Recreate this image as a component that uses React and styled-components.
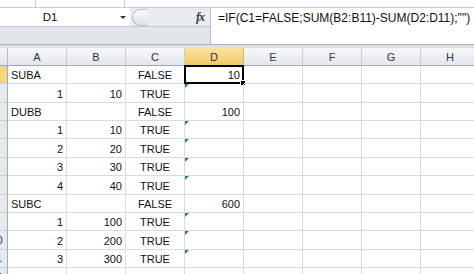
import styled, { createGlobalStyle } from 'styled-components';

const GlobalStyle = createGlobalStyle`
  html, body {
    margin: 0;
    padding: 0;
    background: #ffffff;
    overflow: hidden;
  }
  body {
    font-family: "Liberation Sans", Arial, sans-serif;
    font-size: 11px;
    color: #000;
  }
`;

const COLS = ['A', 'B', 'C', 'D', 'E', 'F', 'G', 'H'];

const rows = [
  { a: 'SUBA', c: 'FALSE', d: '10', sel: true },
  { a: '1', b: '10', c: 'TRUE', tri: true },
  { a: 'DUBB', c: 'FALSE', d: '100' },
  { a: '1', b: '10', c: 'TRUE', tri: true },
  { a: '2', b: '20', c: 'TRUE', tri: true },
  { a: '3', b: '30', c: 'TRUE', tri: true },
  { a: '4', b: '40', c: 'TRUE', tri: true },
  { a: 'SUBC', c: 'FALSE', d: '600' },
  { a: '1', b: '100', c: 'TRUE', tri: true },
  { a: '2', b: '200', c: 'TRUE', tri: true },
  { a: '3', b: '300', c: 'TRUE', tri: true },
  {},
];

const isNum = (v) => v !== undefined && /^\d+$/.test(v);

function App() {
  return (
    <Screen>
      <GlobalStyle />
      <TopStrip>
        <StripCell w={35} />
        <StripCell w={88} />
      </TopStrip>
      <FormulaBar>
        <LeftPane>
          <NameRow>
            <NameBox>
              <span>D1</span>
              <Arrow />
            </NameBox>
            <FxArea>
              <Grip />
              <Fx>fx</Fx>
            </FxArea>
          </NameRow>
        </LeftPane>
        <FormulaInput>{'=IF(C1=FALSE;SUM(B2:B11)-SUM(D2:D11);"")'}</FormulaInput>
      </FormulaBar>
      <Spacer />
      <Viewport>
        <Grid>
          <Corner />
          {COLS.map((c) => (
            <ColHead key={c} active={c === 'D'}>{c}</ColHead>
          ))}
          {rows.map((r, i) => (
            <Row key={i}>
              <RowHead active={i === 0}>{i + 1}</RowHead>
              <Cell align={isNum(r.a) ? 'right' : 'left'}>{r.a}</Cell>
              <Cell align="right">{r.b}</Cell>
              <Cell align="center">{r.c}</Cell>
              <Cell align="right">
                {r.d}
                {r.tri && <Tri />}
                {r.sel && (
                  <Selection>
                    <Handle />
                  </Selection>
                )}
              </Cell>
              <Cell />
              <Cell />
              <Cell />
              <Cell />
            </Row>
          ))}
        </Grid>
      </Viewport>
    </Screen>
  );
}

const Screen = styled.div`
  width: 474px;
  height: 274px;
  overflow: hidden;
  display: flex;
  flex-direction: column;
  background: #ffffff;
`;

const TopStrip = styled.div`
  height: 7px;
  flex: none;
  display: flex;
  background: #fbfcfd;
  border-bottom: 1px solid #c9ced6;
`;

const StripCell = styled.div`
  width: ${(p) => p.w}px;
  border-right: 1px solid #c9ced6;
`;

const FormulaBar = styled.div`
  height: 36px;
  flex: none;
  display: flex;
  background: #e2e6eb;
`;

const LeftPane = styled.div`
  width: 210px;
  display: flex;
  flex-direction: column;
`;

const NameRow = styled.div`
  height: 18px;
  display: flex;
  border-bottom: 1px solid #c3c9d1;
`;

const NameBox = styled.div`
  width: 130px;
  background: #ffffff;
  position: relative;
  display: flex;
  align-items: center;
  justify-content: center;
  padding-right: 30px;
  box-sizing: border-box;
  font-size: 11.5px;
  color: #111;
`;

const Arrow = styled.div`
  position: absolute;
  right: 4px;
  top: 8px;
  width: 0;
  height: 0;
  border-left: 3px solid transparent;
  border-right: 3px solid transparent;
  border-top: 3px solid #333;
`;

const FxArea = styled.div`
  flex: 1;
  display: flex;
  align-items: center;
  justify-content: space-between;
  padding: 0 6px 0 2px;
  background: #e9ecf0;
`;

const Grip = styled.div`
  width: 14px;
  height: 15px;
  border: 1px solid #b6bcc5;
  border-right: none;
  border-radius: 9px 0 0 9px;
  background: linear-gradient(#fafbfc, #dde1e6);
`;

const Fx = styled.span`
  font-family: "Liberation Serif", "Times New Roman", serif;
  font-style: italic;
  font-weight: bold;
  font-size: 12px;
  color: #3a3a3a;
  letter-spacing: -1px;
`;

const FormulaInput = styled.div`
  flex: 1;
  background: #ffffff;
  border-left: 1px solid #b9c0c9;
  padding: 3px 0 0 7px;
  font-size: 12px;
  color: #111;
  white-space: nowrap;
  overflow: hidden;
`;

const Spacer = styled.div`
  height: 3px;
  flex: none;
  background: #dde1e6;
  border-top: 1px solid #aab3bf;
`;

const Viewport = styled.div`
  flex: 1;
  overflow: hidden;
`;

const Grid = styled.div`
  margin-left: -14px;
  display: grid;
  grid-template-columns: 22px repeat(8, 59px);
  grid-template-rows: 18px;
  grid-auto-rows: 18.36px;
`;

const Row = styled.div`
  display: contents;
`;

const Corner = styled.div`
  background: linear-gradient(#f6f7f9, #e1e5ea);
  border-right: 1px solid #b3bac4;
  border-bottom: 1px solid #9ea8b6;
`;

const ColHead = styled.div`
  display: flex;
  align-items: center;
  justify-content: center;
  box-sizing: border-box;
  font-size: 11px;
  color: #2d3440;
  border-right: 1px solid ${(p) => (p.active ? '#e2b45c' : '#c8cdd4')};
  border-bottom: 1px solid ${(p) => (p.active ? '#e0a93d' : '#9ea8b6')};
  background: ${(p) =>
    p.active
      ? 'linear-gradient(#fbe3a0, #f3c868)'
      : 'linear-gradient(#f7f8fa, #e3e7ec)'};
`;

const RowHead = styled.div`
  display: flex;
  align-items: center;
  justify-content: center;
  box-sizing: border-box;
  font-size: 11px;
  color: #25406e;
  border-right: 1px solid #9ea8b6;
  border-bottom: 1px solid #c5ccd5;
  background: ${(p) => (p.active ? '#f7d57f' : '#e6e9ee')};
`;

const Cell = styled.div`
  position: relative;
  box-sizing: border-box;
  display: flex;
  align-items: flex-end;
  justify-content: ${(p) =>
    p.align === 'right' ? 'flex-end' : p.align === 'center' ? 'center' : 'flex-start'};
  padding: 0 3px 2px 3px;
  border-right: 1px solid #dadcdf;
  border-bottom: 1px solid #dadcdf;
  font-size: 11px;
  line-height: 12px;
  color: #111;
  white-space: nowrap;
`;

const Tri = styled.div`
  position: absolute;
  left: 0;
  top: 0;
  width: 0;
  height: 0;
  border-top: 4px solid #2d8a2d;
  border-right: 4px solid transparent;
`;

const Selection = styled.div`
  position: absolute;
  left: -1px;
  top: -1px;
  right: -1px;
  bottom: -1px;
  border: 2px solid #000;
  pointer-events: none;
`;

const Handle = styled.div`
  position: absolute;
  right: -4px;
  bottom: -4px;
  width: 4px;
  height: 4px;
  background: #000;
  border: 1px solid #fff;
`;

export default App;
